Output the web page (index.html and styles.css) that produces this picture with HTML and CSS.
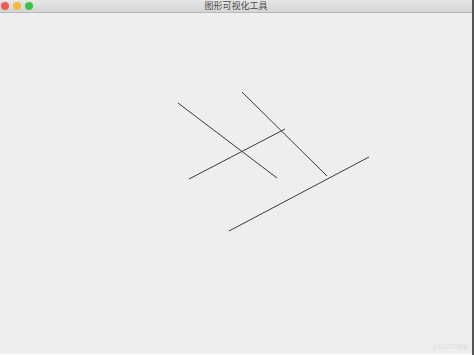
FILE: index.html
```html
<!DOCTYPE html>
<html>
<head>
    <meta charset="utf-8">
    <link rel="stylesheet" href="styles.css">
</head>
<body>
<div id="frame">
    <div id="window">
        <div id="titlebar">
            <div class="lights">
                <span class="light red"></span>
                <span class="light yellow"></span>
                <span class="light green"></span>
            </div>
            <span class="title">图形可视化工具</span>
        </div>
        <div id="canvas">
            <svg class="drawing" width="472" height="340" viewBox="0 13 472 340">
                <line x1="178" y1="103" x2="277" y2="178"/>
                <line x1="189" y1="179" x2="285" y2="129"/>
                <line x1="242" y1="92" x2="327" y2="176"/>
                <line x1="229" y1="231" x2="369" y2="157"/>
            </svg>
            <span class="mark">@51CTO博客</span>
        </div>
        <div id="bottomedge"></div>
    </div>
    <div id="rightedge"></div>
</div>
</body>
</html>
```
FILE: styles.css
```css
body {
    margin: 0;
    padding: 0;
    background-color: #eeeeee;
    overflow: hidden;
}

#frame {
    display: flex;
    width: 474px;
    height: 355px;
}

#window {
    flex: 1;
    display: flex;
    flex-direction: column;
}

#titlebar {
    position: relative;
    height: 12px;
    background: linear-gradient(#e6e6e6, #d4d4d4);
    border-bottom: 1px solid #b8b8b8;
    display: flex;
    align-items: center;
    justify-content: center;
}

.lights {
    position: absolute;
    left: 1px;
    top: 2px;
    display: flex;
    gap: 4px;
}

.light {
    width: 8px;
    height: 8px;
    border-radius: 50%;
}
.red { background-color: #f25b55; }
.yellow { background-color: #f6bb3b; }
.green { background-color: #3cc446; }

.title {
    font-family: "Noto Sans CJK SC", sans-serif;
    font-size: 9px;
    line-height: 12px;
    color: #4a4a4a;
}

#canvas {
    position: relative;
    flex: 1;
    background-color: #eeeeee;
    overflow: hidden;
}

.drawing {
    display: block;
}

.drawing line {
    stroke: #3a3a3a;
    stroke-width: 1;
}

.mark {
    position: absolute;
    right: 4px;
    bottom: 2px;
    font-family: "Noto Sans CJK SC", sans-serif;
    font-size: 6px;
    color: #dcdcdc;
}

#bottomedge {
    height: 2px;
    background-color: #f7f7f7;
}

#rightedge {
    width: 2px;
    background-color: #555555;
}
```
